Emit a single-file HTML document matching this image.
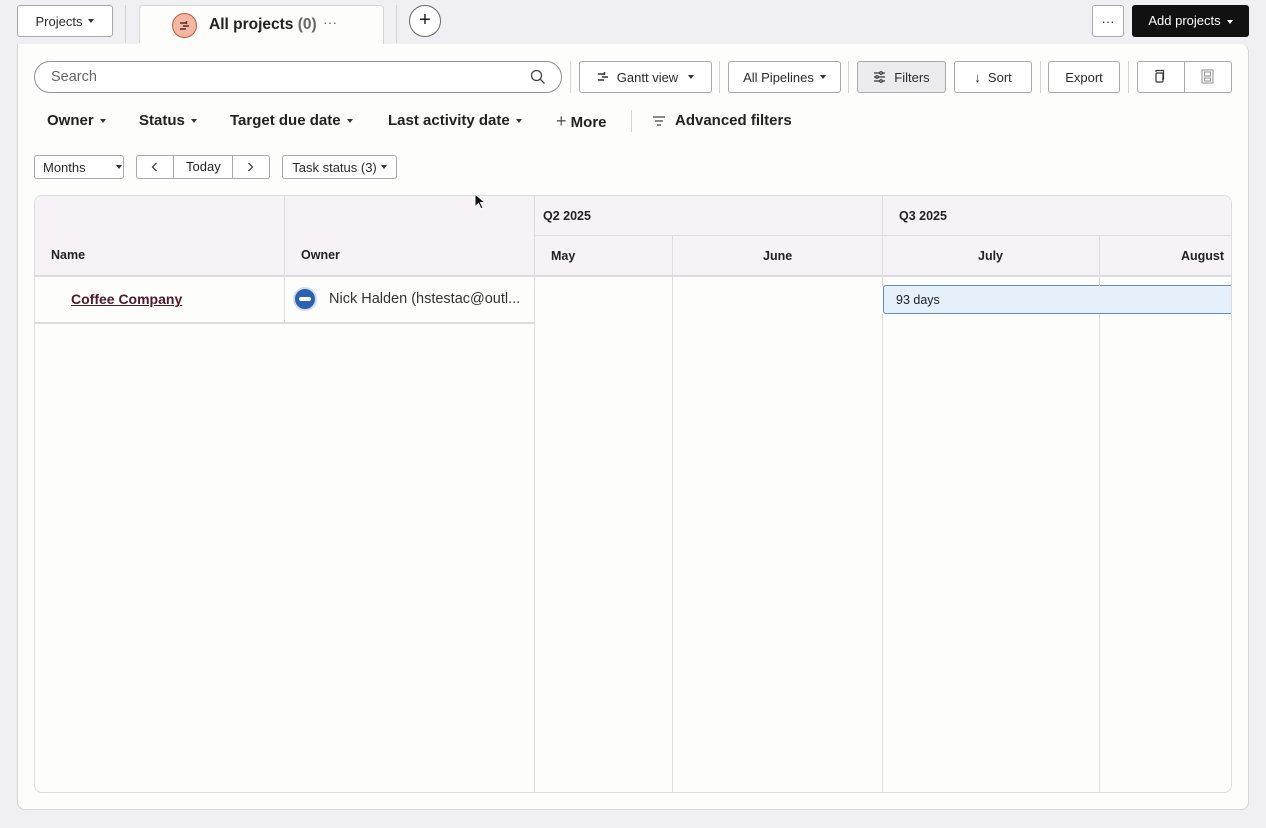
<!DOCTYPE html>
<html><head><style>
*{box-sizing:border-box;margin:0;padding:0}
body{width:1266px;height:828px;background:#f0f0f3;font-family:"Liberation Sans",sans-serif;color:#222;position:relative;overflow:hidden}
.a{position:absolute}
.btn{position:absolute;border:1px solid #a9a9ad;border-radius:3px;background:#fff;font-size:13px;display:flex;align-items:center;justify-content:center;color:#2a2a2a}
.car{display:inline-block;border-left:3.5px solid transparent;border-right:3.5px solid transparent;border-top:4px solid #333;margin-left:6px;vertical-align:middle}
.f{position:absolute;top:112px;font-size:15px;font-weight:bold;color:#222}
.th{position:absolute;font-size:12.5px;font-weight:bold;color:#222}
.vl{position:absolute;width:1px;background:#dcdcdf}
.hl{position:absolute;height:1px;background:#dcdcdf}
</style></head><body>
<div class="btn" style="left:17px;top:5px;width:96px;height:32px">Projects<span class="car"></span></div>
<div class="a" style="left:125px;top:5px;width:1px;height:38px;background:#d4d4d8"></div>
<div class="a" style="left:139px;top:5px;width:245px;height:40px;background:#fdfdfc;border:1px solid #d6d6da;border-bottom:none;border-radius:4px 4px 0 0"></div>
<div class="a" style="left:172px;top:13px;width:25px;height:25px;border-radius:50%;background:#f3b7a4;border:1px solid #c05a3a"></div>
<svg class="a" style="left:178px;top:19px" width="13" height="13" viewBox="0 0 13 13" stroke="#5a2b1e" stroke-width="1.4"><path d="M2 4H8M5 7H11M2 10H8M8.5 2V5"/></svg>
<div class="a" style="left:209px;top:16px;font-size:15.5px;font-weight:bold">All projects <span style="color:#666">(0)</span></div>
<div class="a" style="left:323px;top:14px;font-size:14px;color:#666">···</div>
<div class="a" style="left:396px;top:5px;width:1px;height:38px;background:#d4d4d8"></div>
<div class="a" style="left:409px;top:5px;width:32px;height:32px;border:1px solid #666;border-radius:50%;background:#fff;text-align:center;line-height:28px;font-size:20px">+</div>
<div class="btn" style="left:1092px;top:5px;width:32px;height:32px">···</div>
<div class="a" style="left:1132px;top:5px;width:117px;height:32px;background:#111;border-radius:3px;color:#fff;font-size:13px;text-align:center;line-height:32px">Add projects<span class="car" style="border-top-color:#fff"></span></div>

<div class="a" style="left:17px;top:44px;width:1232px;height:766px;background:#fdfdfc;border:1px solid #d6d6da;border-top:none;border-radius:0 8px 8px 8px"></div>
<div class="a" style="left:139px;top:43px;width:244px;height:3px;background:#fdfdfc"></div>

<div class="a" style="left:34px;top:61px;width:528px;height:32px;border:1px solid #8f8f95;border-radius:16px;background:#fff;font-size:14.5px;color:#666;padding:7px 16px">Search</div>
<svg class="a" style="left:530px;top:69px" width="16" height="16" viewBox="0 0 16 16" fill="none" stroke="#444" stroke-width="1.3"><circle cx="6.5" cy="6.5" r="5"/><path d="M10.2 10.2L14.5 14.5"/></svg>
<div class="a" style="left:570px;top:61px;width:1px;height:32px;background:#d4d4d8"></div>
<div class="btn" style="left:579px;top:61px;width:133px;height:32px"><svg width="12" height="12" viewBox="0 0 12 12" stroke="#333" stroke-width="1.4" style="margin-right:8px"><path d="M1 3H7M5 6H11M1 9H7M7.5 1V4"/></svg>Gantt view<span class="car" style="margin-left:10px"></span></div>
<div class="a" style="left:719px;top:61px;width:1px;height:32px;background:#d4d4d8"></div>
<div class="btn" style="left:728px;top:61px;width:113px;height:32px">All Pipelines<span class="car"></span></div>
<div class="a" style="left:848px;top:61px;width:1px;height:32px;background:#d4d4d8"></div>
<div class="btn" style="left:857px;top:61px;width:89px;height:32px;background:#ebebee"><svg width="13" height="12" viewBox="0 0 13 12" stroke="#333" stroke-width="1.2" fill="none" style="margin-right:8px"><path d="M1 2H12M1 6H12M1 10H12"/><circle cx="8" cy="2" r="1.3" fill="#ebebee"/><circle cx="4" cy="6" r="1.3" fill="#ebebee"/><circle cx="8" cy="10" r="1.3" fill="#ebebee"/></svg>Filters</div>
<div class="btn" style="left:954px;top:61px;width:78px;height:32px">↓&nbsp; Sort</div>
<div class="a" style="left:1040px;top:61px;width:1px;height:32px;background:#d4d4d8"></div>
<div class="btn" style="left:1048px;top:61px;width:72px;height:32px">Export</div>
<div class="a" style="left:1128px;top:61px;width:1px;height:32px;background:#d4d4d8"></div>
<div class="btn" style="left:1137px;top:61px;width:95px;height:32px"></div>
<div class="a" style="left:1184px;top:62px;width:1px;height:30px;background:#a9a9ad"></div>
<svg class="a" style="left:1153px;top:69px" width="14" height="15" viewBox="0 0 14 15" fill="none" stroke="#333" stroke-width="1.2"><path d="M3 3V1.5H10.5V10H9"/><rect x="3" y="4" width="7" height="9" rx="1"/></svg>
<svg class="a" style="left:1201px;top:69px" width="13" height="15" viewBox="0 0 13 15" fill="none" stroke="#999" stroke-width="1.1"><rect x="1" y="1" width="11" height="13"/><rect x="3.5" y="3" width="6" height="4"/><rect x="3.5" y="9" width="6" height="3"/></svg>

<div class="f" style="left:47px">Owner<span class="car"></span></div>
<div class="f" style="left:139px">Status<span class="car"></span></div>
<div class="f" style="left:230px">Target due date<span class="car"></span></div>
<div class="f" style="left:388px">Last activity date<span class="car"></span></div>
<div class="f" style="left:556px;top:111px"><span style="font-weight:normal;font-size:18px;color:#555">+</span> More</div>
<div class="a" style="left:631px;top:110px;width:1px;height:22px;background:#d4d4d8"></div>
<svg class="a" style="left:652px;top:115px" width="14" height="12" viewBox="0 0 14 12" stroke="#444" stroke-width="1.3"><path d="M1 2H13M3 6H11M5 10H9"/></svg>
<div class="f" style="left:675px">Advanced filters</div>

<div class="btn" style="left:34px;top:155px;width:90px;height:24px;justify-content:flex-start;padding-left:8px">Months<span class="car" style="margin-left:30px"></span></div>
<div class="btn" style="left:136px;top:155px;width:134px;height:24px"></div>
<div class="a" style="left:173px;top:156px;width:1px;height:22px;background:#a9a9ad"></div>
<div class="a" style="left:232px;top:156px;width:1px;height:22px;background:#a9a9ad"></div>
<svg class="a" style="left:151px;top:162px" width="7" height="10" viewBox="0 0 7 10" fill="none" stroke="#333" stroke-width="1.2"><path d="M5.5 1L1.5 5L5.5 9"/></svg>
<div class="a" style="left:186px;top:159px;font-size:13px">Today</div>
<svg class="a" style="left:247px;top:162px" width="7" height="10" viewBox="0 0 7 10" fill="none" stroke="#333" stroke-width="1.2"><path d="M1.5 1L5.5 5L1.5 9"/></svg>
<div class="btn" style="left:282px;top:155px;width:115px;height:24px">Task status (3)<span class="car" style="margin-left:4px"></span></div>

<div class="a" style="left:34px;top:195px;width:1198px;height:598px;border:1px solid #dcdcdf;border-radius:8px;background:#fdfdfc;overflow:hidden">
 <div class="a" style="left:0;top:0;width:1198px;height:80px;background:#f6f2f6"></div>
 <div class="a" style="left:848px;top:89px;width:350px;height:29px;background:#e5f0fa;border:1px solid #5f8cc8;border-right:none;border-radius:3px 0 0 3px;font-size:12.5px;padding:7px 12px">93 days</div>
</div>
<div class="hl" style="left:34px;top:275px;width:1198px;height:2px"></div>
<div class="hl" style="left:534px;top:235px;width:698px"></div>
<div class="hl" style="left:34px;top:322px;width:500px;height:2px"></div>
<div class="vl" style="left:284px;top:196px;height:127px"></div>
<div class="vl" style="left:534px;top:196px;height:596px"></div>
<div class="vl" style="left:672px;top:236px;height:556px"></div>
<div class="vl" style="left:882px;top:196px;height:90px"></div>
<div class="vl" style="left:882px;top:314px;height:478px"></div>
<div class="vl" style="left:1099px;top:236px;height:50px"></div>
<div class="vl" style="left:1099px;top:314px;height:478px"></div>
<div class="th" style="left:51px;top:248px">Name</div>
<div class="th" style="left:301px;top:248px">Owner</div>
<div class="th" style="left:543px;top:209px">Q2 2025</div>
<div class="th" style="left:899px;top:209px">Q3 2025</div>
<div class="th" style="left:551px;top:249px">May</div>
<div class="th" style="left:763px;top:249px">June</div>
<div class="th" style="left:978px;top:249px">July</div>
<div class="th" style="left:1181px;top:249px">August</div>
<div class="a" style="left:71px;top:291px;font-size:14px;font-weight:bold;color:#4a1a2c;text-decoration:underline">Coffee Company</div>
<div class="a" style="left:293px;top:287px;width:24px;height:24px;border-radius:50%;background:#2a62b0;border:2px solid #cfdcee"></div>
<div class="a" style="left:299px;top:297px;width:12px;height:4px;border-radius:2px;background:#fff"></div>
<div class="a" style="left:329px;top:291px;font-size:14.5px;color:#333">Nick Halden (hstestac@outl...</div>
<svg class="a" style="left:474px;top:193px" width="12" height="18" viewBox="0 0 12 18"><path d="M1 1V14L4.5 10.5L7 16L9 15L6.5 9.5H11Z" fill="#111" stroke="#fff" stroke-width="1"/></svg>
</body></html>
